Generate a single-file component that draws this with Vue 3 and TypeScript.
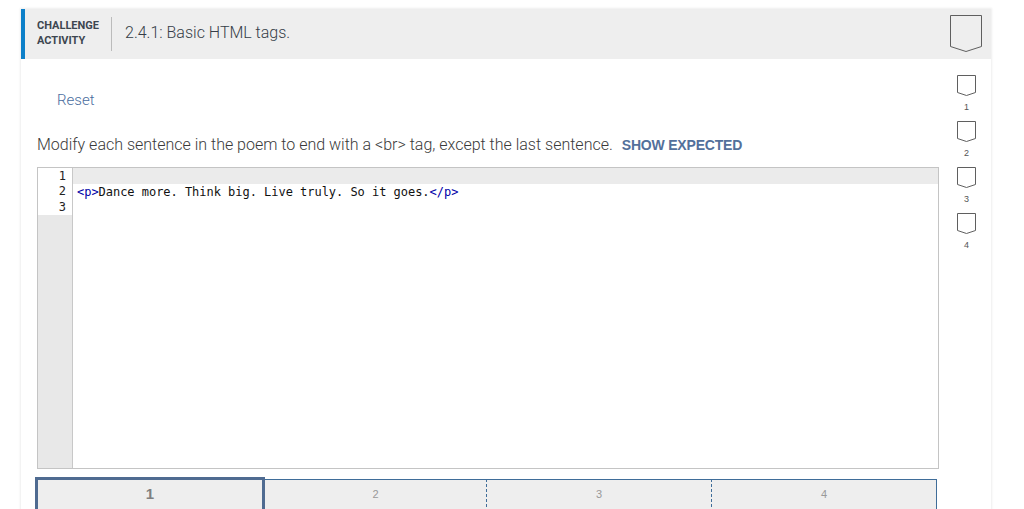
<script setup lang="ts">
const levels = [1, 2, 3, 4];
const tabs = [2, 3, 4];
const lines = [1, 2, 3];
</script>

<template>
  <div class="page">
    <section class="card">
      <header class="head">
        <div class="label">CHALLENGE<br />ACTIVITY</div>
        <h1 class="title">2.4.1: Basic HTML tags.</h1>
        <svg class="chev big" width="32" height="37" viewBox="0 0 32 37">
          <path d="M.5 .5H31.5V31.5L16 36.5L.5 31.5Z" />
        </svg>
      </header>
      <div class="body">
        <div class="main">
          <a class="reset">Reset</a>
          <p class="prompt">
            <span>Modify each sentence in the poem to end with a &lt;br&gt; tag, except the last sentence.</span>
            <b class="show">SHOW EXPECTED</b>
          </p>
          <div class="editor">
            <div class="gutter">
              <div v-for="n in lines" :key="n" class="num">{{ n }}</div>
            </div>
            <div class="code">
              <div class="line active"></div>
              <div class="line"><span class="tag">&lt;p&gt;</span>Dance more. Think big. Live truly. So it goes.<span class="tag">&lt;/p&gt;</span></div>
              <div class="line"></div>
            </div>
          </div>
          <div class="tabs">
            <div class="tab current">1</div>
            <div v-for="t in tabs" :key="t" class="tab" :class="['t' + t, { last: t === 4 }]">{{ t }}</div>
          </div>
        </div>
        <aside class="side">
          <div v-for="l in levels" :key="l" class="level">
            <svg class="chev" width="19" height="22" viewBox="0 0 19 22">
              <path d="M.5 .5H18.5V17.5L9.5 20.5L.5 17.5Z" />
            </svg>
            <span>{{ l }}</span>
          </div>
        </aside>
      </div>
    </section>
  </div>
</template>

<style>
html, body { background: #fff; overflow: hidden; }
</style>

<style scoped>
.page {
  height: 509px;
  overflow: hidden;
  padding: 9px 0 0 21px;
  box-sizing: border-box;
  font-family: Roboto, "Liberation Sans", sans-serif;
}
.card {
  width: 970px;
  height: 520px;
  box-shadow: 0 0 2px 1px #eee;
  background: #fff;
}
.head {
  height: 50px;
  box-sizing: border-box;
  display: flex;
  align-items: center;
  background: #eee;
  border-left: 4px solid #0d80c9;
  padding: 0 9px 0 12px;
}
.label {
  font-size: 11px;
  font-weight: 700;
  line-height: 15px;
  color: #3d4650;
  width: 75px;
  height: 34px;
  padding-top: 1px;
  box-sizing: border-box;
  border-right: 1px solid #bbb;
  margin-right: 13px;
  flex: none;
}
.title {
  margin: -4px 0 0;
  font-size: 16px;
  font-weight: 300;
  color: #353d47;
  flex: 1;
}
.chev { display: block; flex: none; }
.chev path { fill: none; stroke: #5f5f5f; stroke-width: 1; }
.big { margin-top: -1px; }
.body { display: flex; }
.main { width: 902px; margin-left: 16px; flex: none; }
.reset {
  display: block;
  margin: 33px 0 0 20px;
  font-size: 15px;
  line-height: 17px;
  font-weight: 300;
  color: #4a6d9e;
}
.prompt {
  margin: 26px 0 0;
  font-size: 16px;
  line-height: 19px;
  font-weight: 300;
  color: #3a3a3a;
  display: flex;
  align-items: baseline;
  gap: 9px;
  white-space: nowrap;
}
.show {
  font-family: "Liberation Sans", sans-serif;
  font-size: 14px;
  letter-spacing: -0.2px;
  font-weight: 700;
  color: #53709b;
}
.editor {
  margin-top: 12px;
  height: 302px;
  box-sizing: border-box;
  border: 1px solid #c4c4c4;
  display: flex;
  font-family: "DejaVu Sans Mono", monospace;
  font-size: 12px;
  letter-spacing: -0.03px;
  line-height: 15.4px;
}
.gutter {
  width: 35px;
  flex: none;
  padding-top: 1px;
  background: #e8e8e8;
  border-right: 1px solid #c8c8c8;
  box-sizing: border-box;
  color: #222;
  text-align: right;
}
.num { padding-right: 6px; background: #fff; }
.num:first-child { box-shadow: 0 -1px 0 #fff; }
.code { flex: 1; color: #111; }
.line { height: 15.4px; padding-left: 4px; white-space: pre; }
.line.active { background: #ebebeb; height: 16px; margin-bottom: 1px; }
.tag { color: #0000a8; }
.tabs {
  display: flex;
  margin: 8px 0 0 -2px;
  width: 902px;
  height: 40px;
  align-items: stretch;
  font-size: 11px;
  color: #999;
}
.tab {
  flex: none;
  width: 225px;
  background: #eee;
  border-top: 1px solid #3f6d99;
  border-right: 1px dashed #3f6d99;
  margin-top: 2px;
  text-align: center;
  padding-top: 8px;
  font-family: "Liberation Sans", sans-serif;
  box-sizing: border-box;
}
.tab.t2 { width: 222px; }
.tab.last { border-right: 1px solid #3f6d99; }
.tab.current {
  width: 230px;
  margin-top: 0;
  border: 3px solid #4f6b91;
  padding-top: 5px;
  font-size: 15px;
  font-weight: 700;
  color: #808080;
}
.side {
  width: 52px;
  box-sizing: border-box;
  padding: 16px 0 0 3px;
  display: flex;
  flex-direction: column;
  align-items: center;
  flex: none;
}
.level {
  height: 46px;
  display: flex;
  flex-direction: column;
  align-items: center;
  font-family: "Liberation Sans", sans-serif;
  font-size: 9px;
  line-height: 10px;
  color: #555;
}
.level span { margin-top: 5px; }
</style>
